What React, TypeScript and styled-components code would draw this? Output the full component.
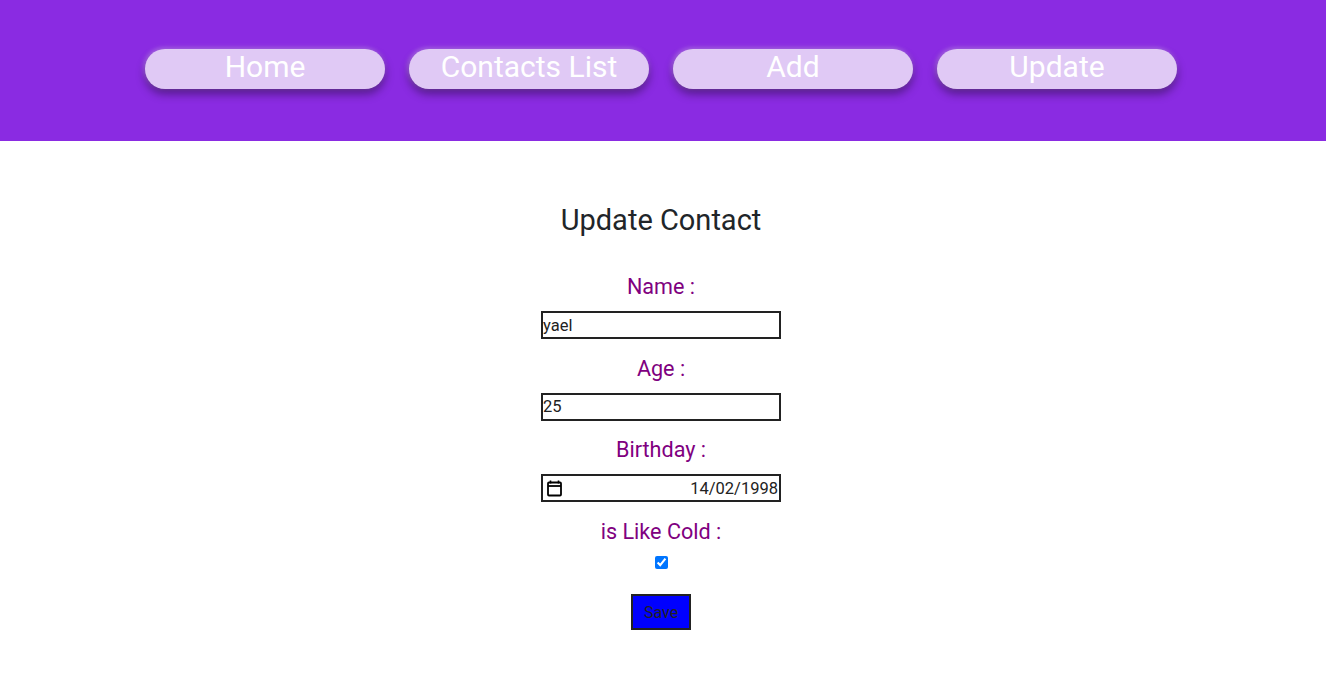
import React, { useState } from "react";
import styled, { createGlobalStyle } from "styled-components";

const GlobalStyle = createGlobalStyle`
    body {
        margin: 0;
        font-family: Roboto, "Liberation Sans", sans-serif;
        background: #ffffff;
        color: #212529;
    }
`;

const Header = styled.header`
    height: 141px;
    background: #8a2be2;
    display: flex;
    justify-content: center;
    align-items: flex-start;
    padding: 49px 4px 0 0;
    box-sizing: border-box;
`;

const Nav = styled.nav`
    display: flex;
    gap: 24px;
`;

const NavButton = styled.a`
    width: 240px;
    height: 40px;
    border-radius: 20px;
    background: #e0c9f5;
    color: #ffffff;
    font-size: 30px;
    line-height: 36px;
    text-align: center;
    text-decoration: none;
    cursor: pointer;
    box-shadow: 0 5px 10px rgba(0, 0, 0, 0.4), -1px -1px 5px rgba(255, 255, 255, 0.35);
`;

const Main = styled.main`
    display: flex;
    flex-direction: column;
    align-items: center;
    padding: 62px 4px 0 0;
`;

const Title = styled.h2`
    margin: 0 0 37px;
    font-size: 29px;
    font-weight: 400;
    line-height: 34px;
    color: #212529;
`;

const Form = styled.form`
    display: flex;
    flex-direction: column;
    align-items: center;
`;

const Field = styled.div`
    display: flex;
    flex-direction: column;
    align-items: center;
    margin-bottom: 16.6px;
`;

const Label = styled.label`
    font-size: 21.6px;
    line-height: 26px;
    color: #800080;
    margin-bottom: 11px;
`;

const Input = styled.input`
    width: 240px;
    height: 28px;
    box-sizing: border-box;
    border: 2px solid #222222;
    padding: 0;
    font-family: Roboto, "Liberation Sans", sans-serif;
    font-size: 16.5px;
    color: #222222;
    outline: none;
    background: #ffffff;
`;

const DateBox = styled.label`
    width: 240px;
    height: 28px;
    box-sizing: border-box;
    border: 2px solid #222222;
    display: flex;
    align-items: center;
    padding: 0 1px 0 4px;
    background: #ffffff;
    cursor: text;
`;

const DateText = styled.input`
    flex: 1;
    min-width: 0;
    border: none;
    padding: 0;
    outline: none;
    text-align: right;
    font-family: Roboto, "Liberation Sans", sans-serif;
    font-size: 16.5px;
    color: #222222;
    background: transparent;
`;

const Check = styled.input`
    width: 13px;
    height: 13px;
    margin: 0;
`;

const SaveButton = styled.button`
    width: 60px;
    height: 36px;
    margin-top: 9px;
    background: #0000ff;
    border: 2px solid #222222;
    color: #222222;
    font-family: Roboto, "Liberation Sans", sans-serif;
    font-size: 16px;
    padding: 0;
`;

function CalendarIcon() {
    return (
        <svg width="15" height="17" viewBox="0 0 15 17" fill="none">
            <path d="M3.5 0.5v3M11.5 0.5v3" stroke="#000" strokeWidth="1.6" />
            <rect x="1" y="2.5" width="13" height="13" rx="1" stroke="#000" strokeWidth="1.8" />
            <path d="M1 6h13" stroke="#000" strokeWidth="1.8" />
        </svg>
    );
}

export default function App() {
    const [name, setName] = useState("yael");
    const [age, setAge] = useState("25");
    const [birthday, setBirthday] = useState("14/02/1998");
    const [likesCold, setLikesCold] = useState(true);

    return (
        <>
            <GlobalStyle />
            <Header>
                <Nav>
                    <NavButton>Home</NavButton>
                    <NavButton>Contacts List</NavButton>
                    <NavButton>Add</NavButton>
                    <NavButton>Update</NavButton>
                </Nav>
            </Header>
            <Main>
                <Title>Update Contact</Title>
                <Form onSubmit={(e) => e.preventDefault()}>
                    <Field>
                        <Label>Name :</Label>
                        <Input value={name} onChange={(e) => setName(e.target.value)} />
                    </Field>
                    <Field>
                        <Label>Age :</Label>
                        <Input value={age} onChange={(e) => setAge(e.target.value)} />
                    </Field>
                    <Field>
                        <Label>Birthday :</Label>
                        <DateBox>
                            <CalendarIcon />
                            <DateText value={birthday} onChange={(e) => setBirthday(e.target.value)} />
                        </DateBox>
                    </Field>
                    <Field>
                        <Label>is Like Cold :</Label>
                        <Check
                            type="checkbox"
                            checked={likesCold}
                            onChange={() => setLikesCold(!likesCold)}
                        />
                    </Field>
                    <SaveButton type="submit">Save</SaveButton>
                </Form>
            </Main>
        </>
    );
}
